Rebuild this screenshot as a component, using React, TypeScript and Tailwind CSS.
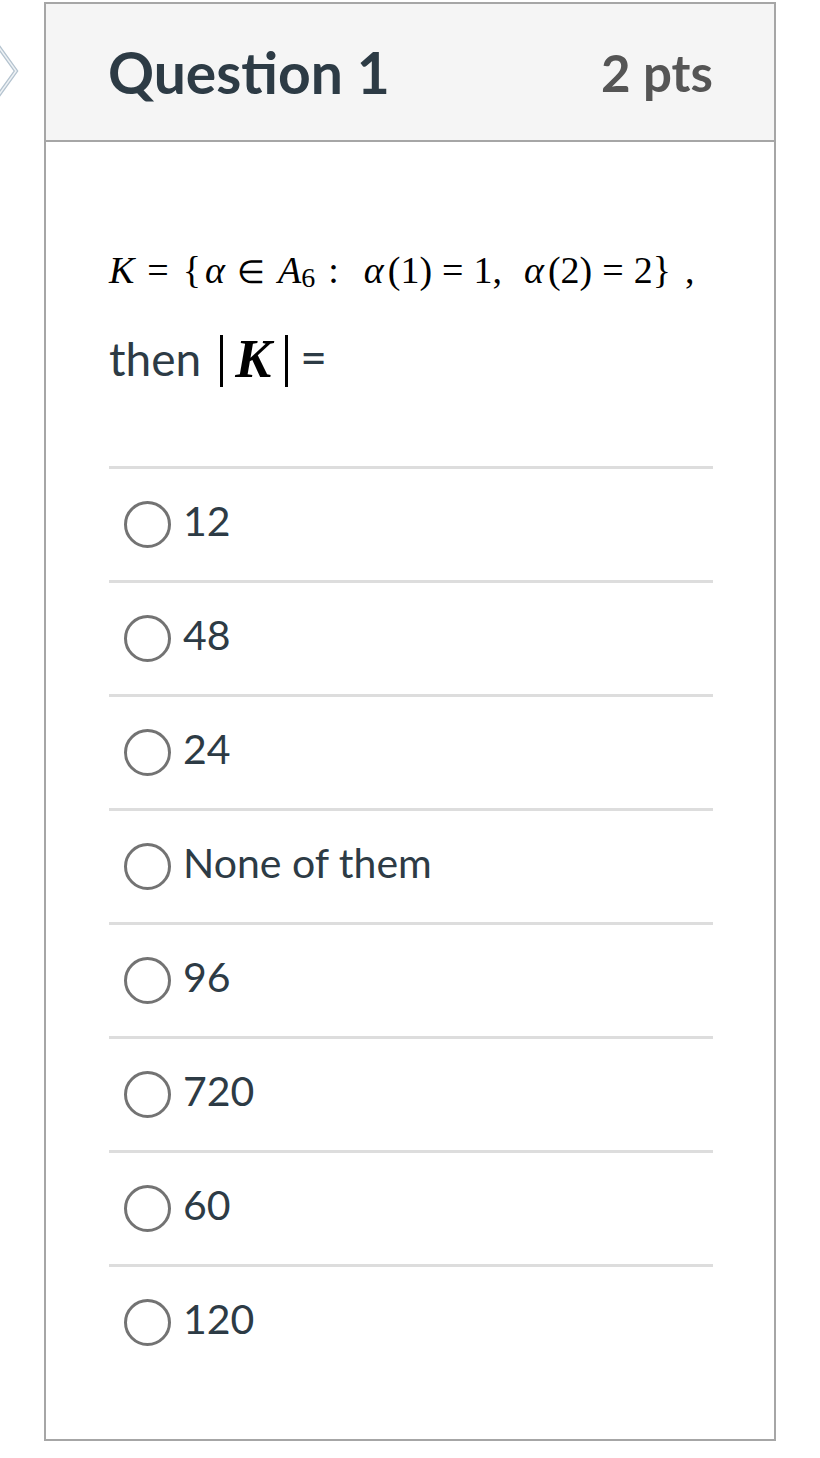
import React from "react";

const options = ["12", "48", "24", "None of them", "96", "720", "60", "120"];
const serif = { fontFamily: "'Liberation Serif', 'Times New Roman', serif" };

export default function App() {
  return (
    <div className="relative w-[820px] h-[1458px] bg-white overflow-hidden" style={{ fontFamily: "Lato, 'Open Sans', sans-serif" }}>
      <svg className="absolute left-0 top-[44px]" width="20" height="54" viewBox="0 0 20 54">
        <polyline points="-2,2 16,27 -2,52" fill="none" stroke="#b4c3cf" strokeWidth="4" strokeLinejoin="miter" />
        <polyline points="-2,2 16,27 -2,52" fill="none" stroke="#eef2f5" strokeWidth="1.5" />
      </svg>
      <div className="ml-[44px] mt-[2px] w-[732px] h-[1439px] border-2 border-[#a6a6a6] flex flex-col">
        <div className="h-[138px] shrink-0 bg-[#f5f5f5] border-b-2 border-[#a6a6a6] flex items-center justify-between pl-[62px] pr-[61px]">
          <span className="text-[57px] font-bold text-[#2d3b45] leading-none">Question 1</span>
          <span className="text-[51px] font-bold text-[#555555] leading-none">2 pts</span>
        </div>
        <div className="pl-[63px] pr-[61px] pt-[104px]">
          <div className="flex items-baseline text-[38px] leading-[48px] text-black whitespace-nowrap" style={serif}>
            <i>K</i>
            <span className="ml-[13px] mr-[14px]">=</span>
            <span>{"{"}</span>
            <i className="ml-[4px]">α</i>
            <span className="ml-[12px] mr-[13px] text-[32px]">∈</span>
            <i>A</i>
            <span className="text-[28px] relative top-[4px]">6</span>
            <span className="ml-[13px]">:</span>
            <i className="ml-[25px]">α</i>
            <span className="ml-[4px]">(1)</span>
            <span className="ml-[10px] mr-[10px]">=</span>
            <span>1,</span>
            <i className="ml-[22px]">α</i>
            <span className="ml-[4px]">(2)</span>
            <span className="ml-[10px] mr-[10px]">=</span>
            <span>2{"}"}</span>
            <span className="ml-[14px]">,</span>
          </div>
          <div className="mt-[33px] flex items-center h-[60px] text-[#2d3b45]">
            <span className="text-[46px] leading-none relative top-[-2px]">then</span>
            <span className="ml-[19px] w-[3px] h-[52px] bg-black" />
            <span className="text-[54px] leading-none font-bold italic text-black ml-[12px] mr-[14px] relative top-[-2px]" style={serif}>K</span>
            <span className="w-[3px] h-[52px] bg-black" />
            <span className="ml-[12px] text-[46px] leading-none relative top-[-4px]">=</span>
          </div>
          <div className="mt-[75px]">
            {options.map((o) => (
              <div key={o} className="h-[114px] flex items-center border-t-[3px] border-[#dddddd]">
                <span className="ml-[15px] w-[47px] h-[47px] rounded-full border-[3px] border-[#737373] shrink-0" />
                <span className="ml-[12px] text-[41px] text-[#2d3b45] leading-none relative top-[-4px]">{o}</span>
              </div>
            ))}
          </div>
        </div>
      </div>
    </div>
  );
}
